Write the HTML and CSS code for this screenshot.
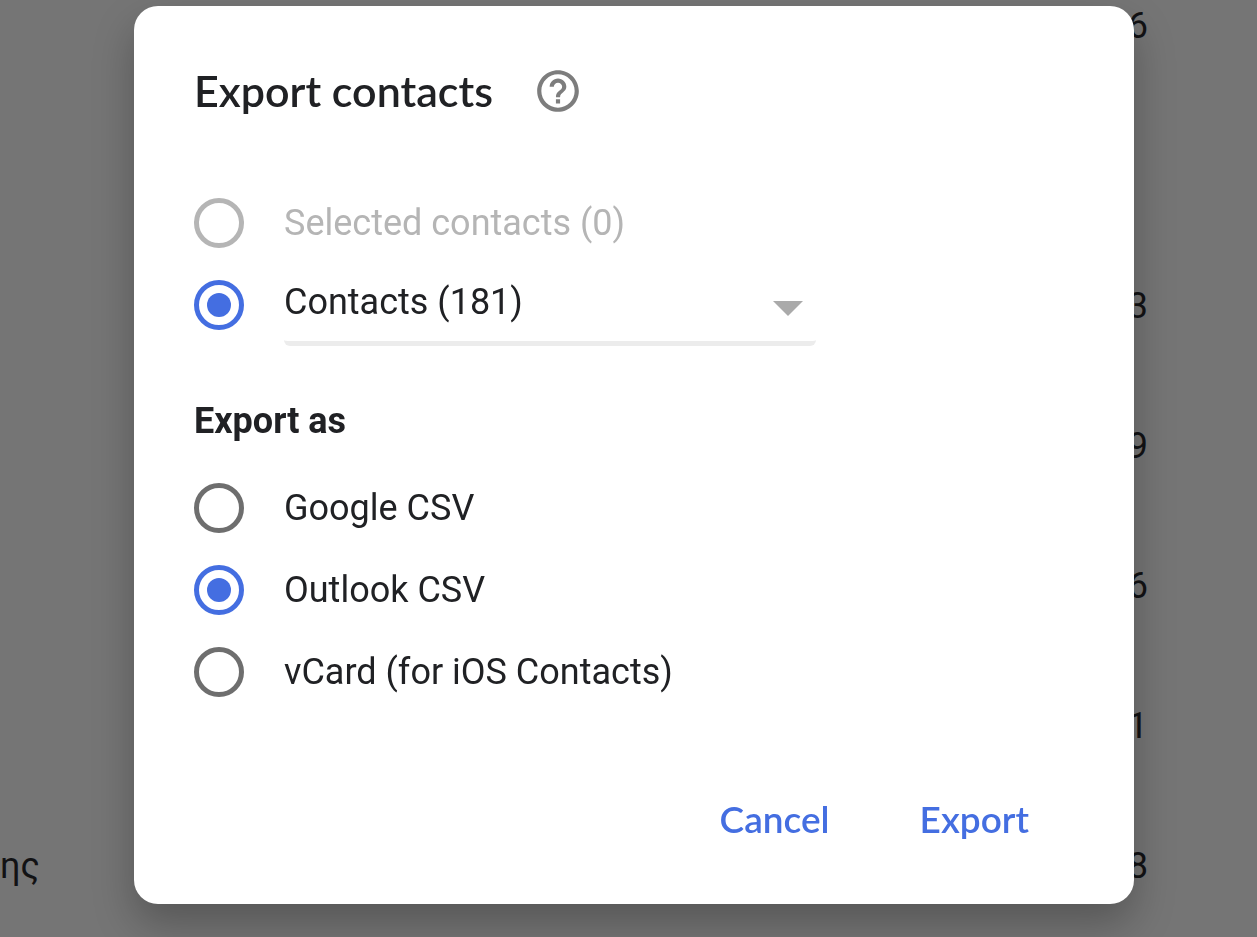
FILE: index.html
```html
<!DOCTYPE html>
<html lang="en">
<head>
    <meta charset="UTF-8">
    <meta name="viewport" content="width=device-width, initial-scale=1.0">
    <title>Export contacts</title>
    <link rel="stylesheet" href="styles.css">
</head>
<body>
    <div class="contact-list" inert>
        <div class="contact-row"><span></span><span>6</span></div>
        <div class="contact-row"><span></span><span></span></div>
        <div class="contact-row"><span></span><span>3</span></div>
        <div class="contact-row"><span></span><span>9</span></div>
        <div class="contact-row"><span></span><span>6</span></div>
        <div class="contact-row"><span></span><span>1</span></div>
        <div class="contact-row"><span lang="el">ης</span><span>8</span></div>
    </div>

    <div class="overlay">
        <form class="dialog" role="dialog" aria-labelledby="dialogTitle">
            <div class="dialog-header">
                <h1 id="dialogTitle">Export contacts</h1>
                <button type="button" class="help-btn" aria-label="Help">
                    <svg viewBox="0 0 24 24" width="50" height="50" fill="currentColor">
                        <path d="M11 18h2v-2h-2v2zm1-16C6.48 2 2 6.48 2 12s4.48 10 10 10 10-4.48 10-10S17.52 2 12 2zm0 18c-4.41 0-8-3.59-8-8s3.59-8 8-8 8 3.59 8 8-3.59 8-8 8zm0-14c-2.21 0-4 1.79-4 4h2c0-1.1.9-2 2-2s2 .9 2 2c0 2-3 1.75-3 5h2c0-2.25 3-2.5 3-5 0-2.21-1.79-4-4-4z"/>
                    </svg>
                </button>
            </div>

            <div class="options">
                <div class="option disabled">
                    <input type="radio" name="source" id="selected" disabled>
                    <label for="selected">Selected contacts (0)</label>
                </div>
                <div class="option">
                    <input type="radio" name="source" id="group" aria-label="Contact group" checked>
                    <div class="select-box">
                        <select id="groupSelect" aria-label="Contacts to export">
                            <option>Contacts (181)</option>
                        </select>
                        <svg class="arrow" viewBox="0 0 30 15" width="30" height="15">
                            <path d="M0 0h30L15 15z"/>
                        </svg>
                    </div>
                </div>
            </div>

            <h2>Export as</h2>
            <div class="options">
                <div class="option">
                    <input type="radio" name="format" id="google">
                    <label for="google">Google CSV</label>
                </div>
                <div class="option">
                    <input type="radio" name="format" id="outlook" checked>
                    <label for="outlook">Outlook CSV</label>
                </div>
                <div class="option">
                    <input type="radio" name="format" id="vcard">
                    <label for="vcard">vCard (for iOS Contacts)</label>
                </div>
            </div>

            <div class="actions">
                <button type="button">Cancel</button>
                <button type="submit">Export</button>
            </div>
        </form>
    </div>
</body>
</html>
```
FILE: styles.css
```css
* {
    box-sizing: border-box;
}
body {
    margin: 0;
    height: 100vh;
    overflow: hidden;
    background: #757575;
    color: #202124;
    font-family: Roboto, Arial, sans-serif;
    font-size: 36px;
}
.contact-list {
    margin-top: -44px;
    padding-right: 109px;
    color: #121214;
}
.contact-row {
    display: flex;
    justify-content: space-between;
    align-items: center;
    height: 140px;
}
.overlay {
    position: fixed;
    inset: 0;
    padding: 6px 123px 33px 134px;
}
.dialog {
    padding: 60px 60px 46px;
    background: #fff;
    border-radius: 24px;
    box-shadow: 0 20px 40px rgba(0, 0, 0, 0.26);
}
.dialog-header {
    display: flex;
    align-items: center;
    gap: 40px;
    margin-bottom: 82px;
}
h1 {
    margin: 0;
    font-family: Lato, sans-serif;
    font-size: 43px;
    font-weight: 600;
    line-height: 50px;
}
h2 {
    margin: 50px 0 37px;
    font-size: 36px;
    font-weight: 700;
    line-height: 50px;
}
.help-btn {
    display: flex;
    padding: 0;
    border: none;
    background: none;
    color: #7d7d7d;
    cursor: pointer;
}
.options {
    display: flex;
    flex-direction: column;
    gap: 32px;
}
.option {
    display: flex;
    gap: 40px;
    line-height: 50px;
}
.option input {
    flex: none;
    appearance: none;
    width: 50px;
    height: 50px;
    margin: 0;
    padding: 8px;
    border: 5px solid #6e6e6e;
    border-radius: 50%;
    background-clip: content-box;
}
.option input:checked {
    border-color: #446ee1;
    background-color: #446ee1;
}
.disabled {
    color: #b5b5b5;
}
.disabled input {
    border-color: #b5b5b5;
}
.select-box {
    display: grid;
    width: 532px;
}
.select-box select {
    grid-area: 1 / 1;
    appearance: none;
    height: 66px;
    padding: 0 50px 18px 0;
    border: none;
    border-bottom: 5px solid #ececec;
    border-radius: 6px;
    background: none;
    color: inherit;
    font: inherit;
    line-height: 42px;
}
.arrow {
    grid-area: 1 / 1;
    justify-self: end;
    margin: 21px 13px 0 0;
    fill: #aaa;
    pointer-events: none;
}
.actions {
    display: flex;
    justify-content: flex-end;
    margin-top: 81px;
}
.actions button {
    height: 80px;
    padding: 0 45px;
    border: none;
    background: none;
    color: #446ee1;
    font-family: Lato, sans-serif;
    font-size: 37px;
    font-weight: 600;
    cursor: pointer;
}
```
